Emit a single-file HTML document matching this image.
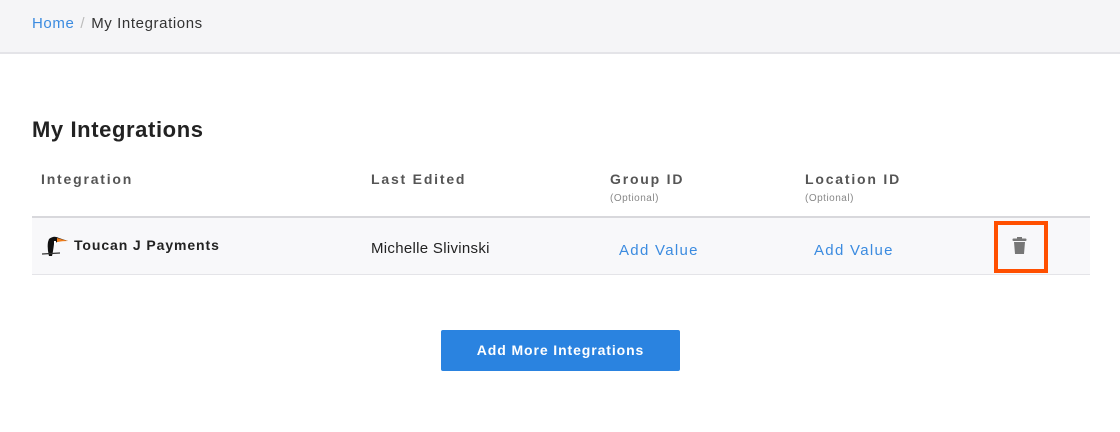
<!DOCTYPE html>
<html><head><style>
body{margin:0;width:1120px;height:432px;background:#fff;font-family:"Liberation Sans",sans-serif;position:relative;overflow:hidden}
.hdr{position:absolute;left:0;top:0;width:1120px;height:52px;background:#f5f5f7;border-bottom:2px solid #e4e4e8}
.bc{position:absolute;left:32px;top:15px;font-size:15px;color:#333;letter-spacing:.6px}
.bc a{color:#3b8be0;text-decoration:none}
.bc .s{color:#bbb;margin:0 6px}
h1{position:absolute;left:32px;top:117px;margin:0;font-size:22px;font-weight:bold;color:#222;letter-spacing:.6px}
.th{position:absolute;top:171px;font-size:14px;font-weight:bold;color:#555;letter-spacing:1.8px}
.opt{position:absolute;top:193px;font-size:10px;color:#888;letter-spacing:.5px}
.row{position:absolute;left:32px;top:216px;width:1058px;height:56px;background:#f8f8fa;border-top:2px solid #d8d8dc;border-bottom:1px solid #e4e4e8}
.t{position:absolute;font-size:14px;color:#222}
.link{position:absolute;top:242px;font-size:15px;color:#3b8be0;letter-spacing:1.3px}
.box{position:absolute;left:994px;top:221px;width:46px;height:44px;border:4px solid #ff4f00}
.btn{position:absolute;left:441px;top:330px;width:239px;height:41px;background:#2a83e0;border-radius:2px;color:#fff;font-weight:bold;font-size:14px;text-align:center;line-height:41px;letter-spacing:.9px}
</style></head><body>
<div class="hdr"><div class="bc"><a>Home</a><span class="s">/</span>My Integrations</div></div>
<h1>My Integrations</h1>
<div class="th" style="left:41px">Integration</div>
<div class="th" style="left:371px">Last Edited</div>
<div class="th" style="left:610px">Group ID</div>
<div class="th" style="left:805px">Location ID</div>
<div class="opt" style="left:610px">(Optional)</div>
<div class="opt" style="left:805px">(Optional)</div>
<div class="row"></div>
<svg style="position:absolute;left:40px;top:234px" width="30" height="26" viewBox="0 0 30 26">
<path d="M9 5 Q14 1 19 4 L28 7 Q22 6 17 8 L14 10 Q13 18 12 22 L9 22 Q7 14 8 8Z" fill="#111"/>
<path d="M17 4 L28 7 Q22 7 17 8Z" fill="#f07d1a"/>
<path d="M14 7 L16 7 L16 11 L14 11Z" fill="#fff"/>
<path d="M2 20 L20 19" stroke="#333" stroke-width="1.2"/>
</svg>
<div class="t" style="left:74px;top:237px;font-weight:bold;font-size:14px;letter-spacing:.9px">Toucan J Payments</div>
<div class="t" style="left:371px;top:240px;font-size:15px;letter-spacing:.3px">Michelle Slivinski</div>
<div class="link" style="left:619px">Add Value</div>
<div class="link" style="left:814px">Add Value</div>
<div class="box"></div>
<svg style="position:absolute;left:1012px;top:237px" width="15" height="18" viewBox="0 0 15 18">
<rect x="0.5" y="1.5" width="14" height="2.5" rx="1" fill="#777"/>
<rect x="5" y="0" width="5" height="2" fill="#777"/>
<path d="M2 5 H13 L12 17 H3Z" fill="#777"/>
</svg>
<div class="btn">Add More Integrations</div>
</body></html>
